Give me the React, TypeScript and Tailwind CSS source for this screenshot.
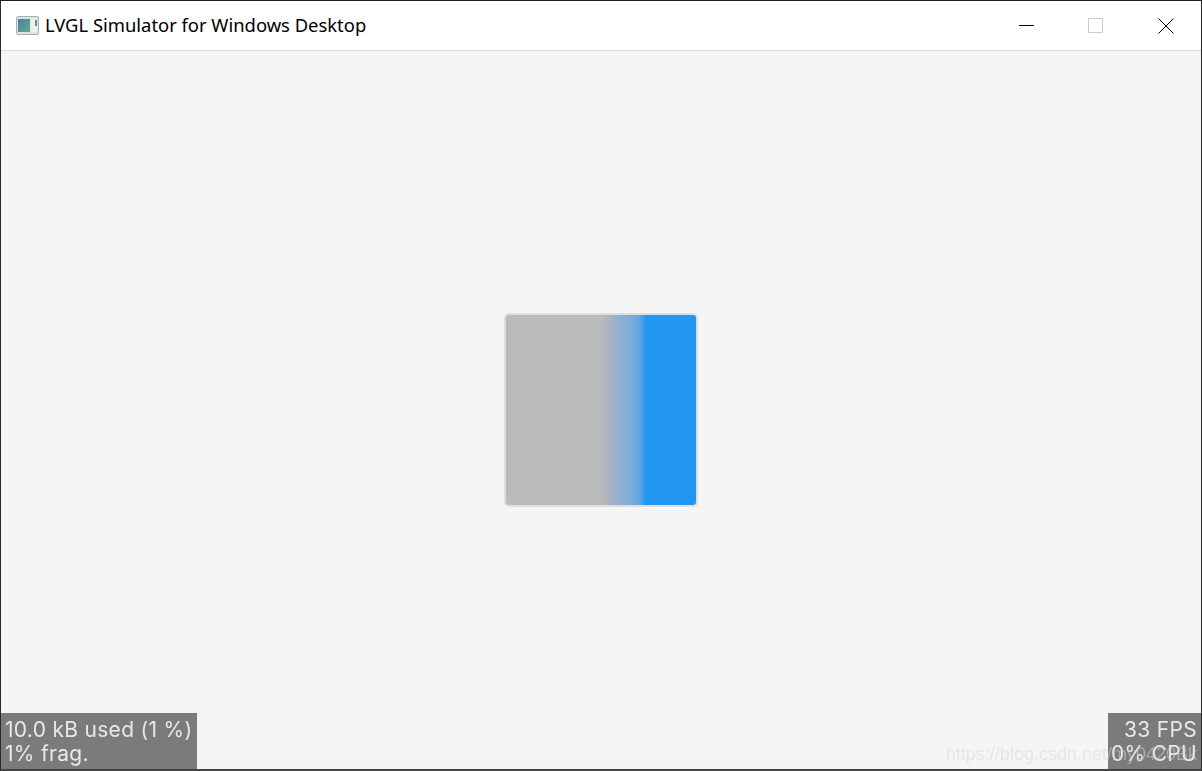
export default function App() {
  return (
    <div className="relative flex h-[771px] w-[1202px] flex-col overflow-hidden border-x border-t border-b-2 border-x-[#2a2a2a] border-t-[#1c1c1c] border-b-[#444444] bg-[#f5f5f5]">
      <header className="flex h-[50px] shrink-0 items-center border-b border-[#dcdcdc] bg-white pl-[15px]">
        <svg width="24" height="20" viewBox="0 0 24 20" className="shrink-0">
          <rect x="0.5" y="0.5" width="22" height="18" rx="1.5" fill="#dfe3e6" stroke="#a8afb5" />
          <defs>
            <linearGradient id="ic" x1="0" y1="0" x2="1" y2="1">
              <stop offset="0" stopColor="#4a7ea6" />
              <stop offset="1" stopColor="#62ab88" />
            </linearGradient>
          </defs>
          <rect x="2" y="3" width="12" height="13" fill="url(#ic)" />
          <rect x="15" y="3" width="6" height="13" fill="#eef0f0" />
          <rect x="19" y="4" width="2" height="6" fill="#4f9a80" />
        </svg>
        <span className="ml-[5px] whitespace-nowrap font-['Noto_Sans',sans-serif] text-[18.4px] leading-none text-black">
          LVGL Simulator for Windows Desktop
        </span>
        <div className="ml-auto flex items-center">
          <svg width="16" height="16" viewBox="0 0 16 16" className="mr-[53px]">
            <path d="M0 7.5H15" stroke="#000" strokeWidth="1" />
          </svg>
          <svg width="16" height="16" viewBox="0 0 16 16" className="mr-[54px]">
            <rect x="0.5" y="0.5" width="14" height="14" fill="none" stroke="#cccccc" />
          </svg>
          <svg width="16" height="16" viewBox="0 0 16 16" className="mr-[27px]">
            <path d="M0.5 0.5L15.5 15.5M15.5 0.5L0.5 15.5" stroke="#000" strokeWidth="1" />
          </svg>
        </div>
      </header>
      <main className="flex flex-1 items-center justify-center">
        <div className="h-[194px] w-[194px] rounded-[5px] border-2 border-[#dedede] bg-[linear-gradient(90deg,#bbbbbb_0%,#bbbbbb_50%,#a0b3c6_56%,#7dadd9_65%,#64a9e3_70%,#2196f3_74%,#2196f3_100%)] blur-[0.5px]" />
      </main>
      <div className="absolute bottom-0 left-0 h-[56px] w-[196px] bg-[#7b7b7b] pl-[4px] pt-[5px] font-['Inter',sans-serif] text-[21px] leading-[24px] tracking-[0.3px] text-[#e8e8e8] blur-[0.4px]">
        <div className="whitespace-nowrap">10.0 kB used (1 %)</div>
        <div className="whitespace-nowrap">1% frag.</div>
      </div>
      <div className="absolute bottom-0 right-0 h-[56px] w-[93px] bg-[#7b7b7b] pr-[4px] pt-[5px] text-right font-['Inter',sans-serif] text-[21px] leading-[24px] tracking-[0.3px] text-[#e8e8e8] blur-[0.4px]">
        <div className="whitespace-nowrap">33 FPS</div>
        <div className="whitespace-nowrap">0% CPU</div>
      </div>
      <div className="absolute bottom-[6px] right-[4px] whitespace-nowrap font-['Liberation_Sans',sans-serif] text-[18px] leading-none text-[#d8d8d8]/50 blur-[0.3px]">
        https://blog.csdn.net/my0420Bk
      </div>
    </div>
  );
}
